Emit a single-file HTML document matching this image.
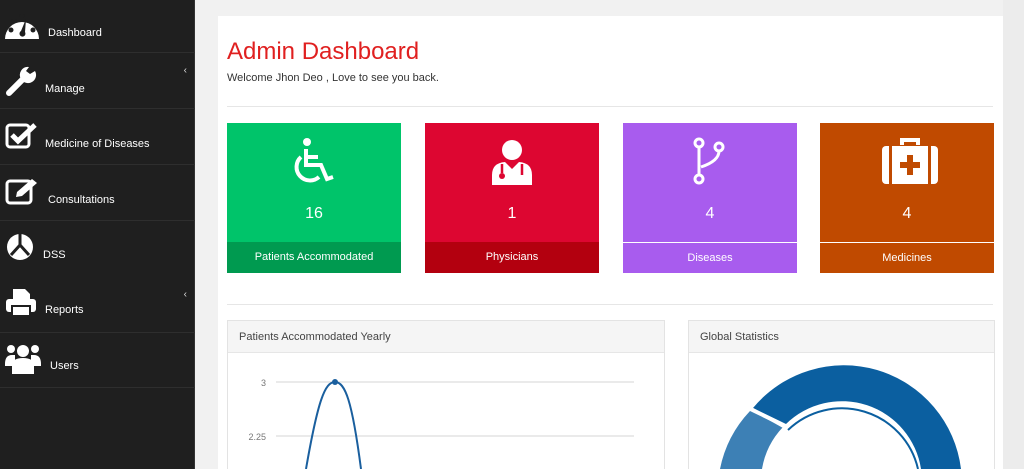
<!DOCTYPE html>
<html style="overflow:hidden;width:1024px;height:469px"><head><style>
*{margin:0;padding:0;box-sizing:border-box}
body{width:1024px;height:469px;overflow:hidden;background:#f1f1f1;font-family:"Liberation Sans",sans-serif;position:relative}
.side{position:absolute;left:0;top:0;width:195px;height:469px;background:#1f1f1f;border-right:1px solid #333}
.item{position:absolute;left:0;width:195px;height:56px;border-bottom:1px solid #2e2e2e;color:#fff;font-size:11px}
.item span{position:absolute}
.item svg{position:absolute}
.chev{position:absolute;right:8px;top:12px;font-size:10px;color:#ddd}
.panel{position:absolute;left:218px;top:16px;width:785px;height:453px;background:#fff}
h1{position:absolute;left:227px;top:38px;font-weight:normal;font-size:24px;color:#e02020}
.welcome{position:absolute;left:227px;top:72px;font-size:11px;color:#333}
.hr{position:absolute;left:227px;width:766px;height:1px;background:#e6e6e6}
.card{position:absolute;top:123px;width:174px;height:150px;color:#fff;text-align:center}
.card .num{position:absolute;top:82px;width:100%;font-size:16px}
.card .foot{position:absolute;top:119px;left:0;width:100%;height:31px;line-height:31px;font-size:11px}
.card svg{position:absolute;left:62px;top:14px}
.box{position:absolute;top:320px;background:#fff;border:1px solid #e3e3e3;height:149px;border-bottom:none}
.box .hd{height:32px;background:#f5f5f5;border-bottom:1px solid #e6e6e6;font-size:11px;color:#444;padding:10px 0 0 11px}
</style></head><body>
<div class="side">
 <div class="item" style="top:0;height:53px"><svg width="36" height="30" viewBox="0 0 36 30" style="left:4px;top:10px"><path d="M1 29 A17 17 0 1 1 35 29 Z" fill="#fff"/><circle cx="7" cy="20" r="2.5" fill="#1f1f1f"/><circle cx="10" cy="11" r="2.5" fill="#1f1f1f"/><circle cx="18" cy="6" r="2.5" fill="#1f1f1f"/><circle cx="29" cy="20" r="2.5" fill="#1f1f1f"/><path d="M22 9 L17 21 A3 3 0 1 0 21 22 Z" fill="#1f1f1f"/></svg><span style="left:48px;top:27px">Dashboard</span></div>
 <div class="item" style="top:53px"><div class="chev">‹</div><svg width="32" height="32" viewBox="0 0 32 32" style="left:5px;top:12px"><path d="M4 28 L18 14" stroke="#fff" stroke-width="6" stroke-linecap="round"/><path d="M16 14 A8 8 0 0 0 30 6 L25 9 L21 6 L24 2 A8 8 0 0 0 16 14Z" fill="#fff"/></svg><span style="left:45px;top:30px">Manage</span></div>
 <div class="item" style="top:109px"><svg width="32" height="30" viewBox="0 0 32 30" style="left:5px;top:12px"><rect x="2" y="4" width="22" height="22" rx="3" fill="none" stroke="#fff" stroke-width="3"/><path d="M7 14 L13 20 L30 4" stroke="#fff" stroke-width="5" fill="none"/></svg><span style="left:45px;top:29px">Medicine of Diseases</span></div>
 <div class="item" style="top:165px"><svg width="34" height="30" viewBox="0 0 34 30" style="left:5px;top:12px"><rect x="2" y="4" width="24" height="22" rx="3" fill="none" stroke="#fff" stroke-width="3"/><path d="M11 20 L12 15 L27 2 L32 6 L17 19 Z" fill="#fff"/></svg><span style="left:48px;top:29px">Consultations</span></div>
 <div class="item" style="top:221px;border:none"><svg width="30" height="30" viewBox="0 0 30 30" style="left:5px;top:12px"><circle cx="15" cy="14" r="13" fill="#fff"/><path d="M15 0 V12 L6 22 M15 12 L24 22" stroke="#1f1f1f" stroke-width="3" fill="none"/></svg><span style="left:43px;top:28px">DSS</span></div>
 <div class="item" style="top:277px"><div class="chev">‹</div><svg width="32" height="30" viewBox="0 0 32 30" style="left:5px;top:11px"><path d="M8 1 H20 L25 6 V11 H8 Z" fill="#fff"/><rect x="1" y="11" width="30" height="13" rx="3" fill="#fff"/><rect x="7" y="18" width="18" height="10" fill="#fff" stroke="#1f1f1f" stroke-width="2"/></svg><span style="left:45px;top:27px">Reports</span></div>
 <div class="item" style="top:332px"><svg width="36" height="32" viewBox="0 0 36 32" style="left:5px;top:10px"><circle cx="6" cy="7" r="4" fill="#fff"/><circle cx="30" cy="7" r="4" fill="#fff"/><circle cx="18" cy="9" r="6" fill="#fff"/><path d="M0 22 Q0 13 7 13 L10 13 L10 24 H0Z M36 22 Q36 13 29 13 L26 13 L26 24 H36Z" fill="#fff"/><path d="M7 32 V24 Q7 16 18 16 Q29 16 29 24 V32Z" fill="#fff"/></svg><span style="left:50px;top:28px">Users</span></div>
</div>
<div class="panel"></div>
<div style="position:absolute;left:1003px;top:0;width:21px;height:469px;background:#ececec"></div>
<h1>Admin Dashboard</h1>
<div class="welcome">Welcome Jhon Deo , Love to see you back.</div>
<div class="hr" style="top:106px"></div>
<div class="hr" style="top:304px"></div>
<div class="card" style="left:227px;background:#00c46a"><svg width="50" height="50" viewBox="0 0 50 50"><circle cx="18" cy="5" r="4" fill="#fff"/><path d="M17 12 V28 H32 L38 42 L44 40" stroke="#fff" stroke-width="4" fill="none"/><path d="M12 20 A13 13 0 1 0 30 40" stroke="#fff" stroke-width="4" fill="none"/><path d="M17 20 H29" stroke="#fff" stroke-width="4"/></svg><div class="num">16</div><div class="foot" style="background:#009a50">Patients Accommodated</div></div>
<div class="card" style="left:425px;background:#dd0631"><svg width="50" height="50" viewBox="0 0 50 50"><circle cx="25" cy="13" r="10" fill="#fff"/><path d="M5 48 V38 Q5 26 18 25 L25 32 L32 25 Q45 26 45 38 V48Z" fill="#fff"/><path d="M15 27 V36 M35 27 V38" stroke="#dd0631" stroke-width="2.5" fill="none"/><circle cx="15" cy="39" r="3" fill="#dd0631"/></svg><div class="num">1</div><div class="foot" style="background:#b3000f">Physicians</div></div>
<div class="card" style="left:623px;background:#a85cee"><svg width="50" height="50" viewBox="0 0 50 50"><circle cx="14" cy="6" r="4" stroke="#fff" stroke-width="3" fill="none"/><circle cx="34" cy="10" r="4" stroke="#fff" stroke-width="3" fill="none"/><circle cx="14" cy="42" r="4" stroke="#fff" stroke-width="3" fill="none"/><path d="M14 10 V38 M34 14 Q34 24 16 30" stroke="#fff" stroke-width="3" fill="none"/></svg><div class="num">4</div><div class="foot" style="background:#a85cee;border-top:1px solid #fff">Diseases</div></div>
<div class="card" style="left:820px;background:#c04a00"><svg width="56" height="50" viewBox="0 0 56 50"><path d="M20 8 V3 H36 V8" stroke="#fff" stroke-width="4" fill="none"/><rect x="0" y="9" width="56" height="38" rx="4" fill="#fff"/><rect x="7" y="9" width="3" height="38" fill="#c04a00"/><rect x="46" y="9" width="3" height="38" fill="#c04a00"/><path d="M28 18 V38 M18 28 H38" stroke="#c04a00" stroke-width="6"/></svg><div class="num">4</div><div class="foot" style="background:#c04a00;border-top:1px solid #fff">Medicines</div></div>
<div class="box" style="left:227px;width:438px"><div class="hd">Patients Accommodated Yearly</div></div>
<div class="box" style="left:688px;width:307px"><div class="hd">Global Statistics</div></div>
<svg width="1024" height="469" style="position:absolute;left:0;top:0">
<line x1="276" y1="382" x2="634" y2="382" stroke="#e3e3e3" stroke-width="1.5"/>
<line x1="276" y1="436" x2="634" y2="436" stroke="#e3e3e3" stroke-width="1.5"/>
<text x="266" y="386" font-size="9" fill="#777" text-anchor="end" font-family="Liberation Sans">3</text>
<text x="266" y="440" font-size="9" fill="#777" text-anchor="end" font-family="Liberation Sans">2.25</text>
<path d="M306 469 C318 400 325 382 335 382 C345 382 352 400 361 469" fill="none" stroke="#1a5f9e" stroke-width="2"/>
<circle cx="335" cy="382" r="3" fill="#1a5f9e"/>
<path d="M753 408 A118 118 0 0 1 961 469 L921 469 A80 80 0 0 0 786 424 Z" fill="#0b5fa0"/>
<path d="M750 411 L783 427 A80 80 0 0 0 762 469 L720 469 A118 118 0 0 1 750 411Z" fill="#3d80b5"/>
<path d="M752 409 L786 428" stroke="#fff" stroke-width="3"/>
<path d="M788 430 A78 78 0 0 1 918 469" fill="none" stroke="#0b5fa0" stroke-width="2"/>
</svg>
</body></html>
